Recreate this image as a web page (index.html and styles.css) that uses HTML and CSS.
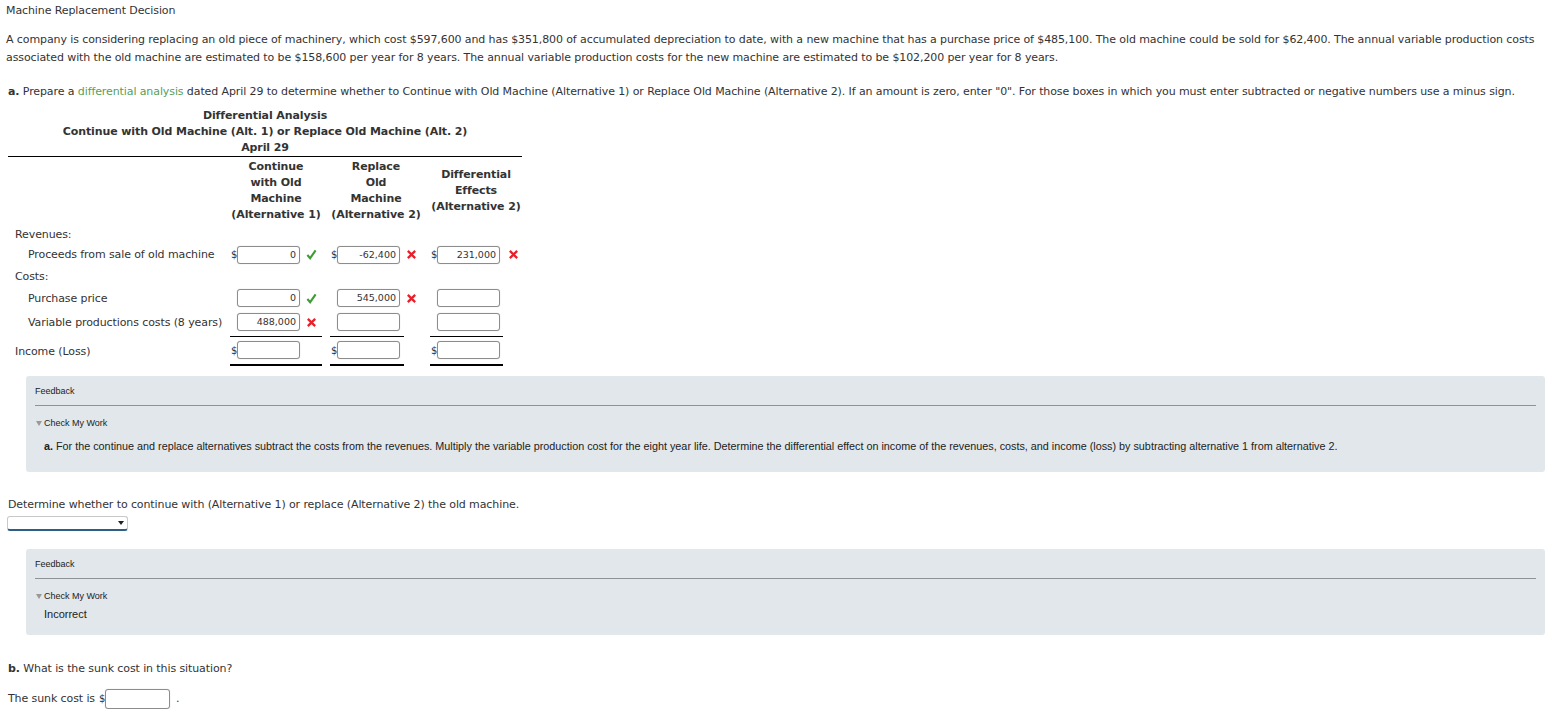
FILE: index.html
```html
<!DOCTYPE html>
<html>
<head>
<meta charset="utf-8">
<link rel="stylesheet" href="styles.css">
</head>
<body>
<div class="page">
  <div class="title">Machine Replacement Decision</div>
  <p class="intro">A company is considering replacing an old piece of machinery, which cost $597,600 and has $351,800 of accumulated depreciation to date, with a new machine that has a purchase price of $485,100. The old machine could be sold for $62,400. The annual variable production costs associated with the old machine are estimated to be $158,600 per year for 8 years. The annual variable production costs for the new machine are estimated to be $102,200 per year for 8 years.</p>
  <p class="q"><b>a.</b> Prepare a <span class="link">differential analysis</span> dated April 29 to determine whether to Continue with Old Machine (Alternative 1) or Replace Old Machine (Alternative 2). If an amount is zero, enter "0". For those boxes in which you must enter subtracted or negative numbers use a minus sign.</p>

  <div class="da">
    <div class="da-title">
      <div>Differential Analysis</div>
      <div>Continue with Old Machine (Alt. 1) or Replace Old Machine (Alt. 2)</div>
      <div>April 29</div>
    </div>
    <div class="row head">
      <div class="lbl"></div>
      <div class="hcell">Continue<br>with Old<br>Machine<br>(Alternative 1)</div>
      <div class="hcell">Replace<br>Old<br>Machine<br>(Alternative 2)</div>
      <div class="hcell mid">Differential<br>Effects<br>(Alternative 2)</div>
    </div>
    <div class="row r-rev"><div class="lbl">Revenues:</div></div>
    <div class="row r-proc">
      <div class="lbl ind">Proceeds from sale of old machine</div>
      <div class="cell"><span class="dol">$</span><span class="inp">0</span><svg class="ic" viewBox="0 0 12 12"><path d="M1.5 6.5 L4.5 10 L10.5 1.5" fill="none" stroke="#3f9c35" stroke-width="2.3"/></svg></div>
      <div class="cell"><span class="dol">$</span><span class="inp">-62,400</span><svg class="ic" viewBox="0 0 12 12"><path d="M2 2 L10 10 M10 2 L2 10" fill="none" stroke="#e8202a" stroke-width="2.5"/></svg></div>
      <div class="cell"><span class="dol">$</span><span class="inp">231,000</span><svg class="ic far" viewBox="0 0 12 12"><path d="M2 2 L10 10 M10 2 L2 10" fill="none" stroke="#e8202a" stroke-width="2.5"/></svg></div>
    </div>
    <div class="row r-costs"><div class="lbl">Costs:</div></div>
    <div class="row r-pp">
      <div class="lbl ind">Purchase price</div>
      <div class="cell"><span class="dol"></span><span class="inp">0</span><svg class="ic" viewBox="0 0 12 12"><path d="M1.5 6.5 L4.5 10 L10.5 1.5" fill="none" stroke="#3f9c35" stroke-width="2.3"/></svg></div>
      <div class="cell"><span class="dol"></span><span class="inp">545,000</span><svg class="ic" viewBox="0 0 12 12"><path d="M2 2 L10 10 M10 2 L2 10" fill="none" stroke="#e8202a" stroke-width="2.5"/></svg></div>
      <div class="cell"><span class="dol"></span><span class="inp"></span></div>
    </div>
    <div class="row r-var">
      <div class="lbl ind">Variable productions costs (8 years)</div>
      <div class="cell"><span class="dol"></span><span class="inp">488,000</span><svg class="ic" viewBox="0 0 12 12"><path d="M2 2 L10 10 M10 2 L2 10" fill="none" stroke="#e8202a" stroke-width="2.5"/></svg></div>
      <div class="cell"><span class="dol"></span><span class="inp"></span></div>
      <div class="cell"><span class="dol"></span><span class="inp"></span></div>
    </div>
    <div class="row r-line">
      <div class="lbl"></div>
      <div class="ul u1"></div>
      <div class="ul u2"></div>
      <div class="ul u3"></div>
    </div>
    <div class="row r-inc">
      <div class="lbl low">Income (Loss)</div>
      <div class="cell"><span class="dol">$</span><span class="inp"></span></div>
      <div class="cell"><span class="dol">$</span><span class="inp"></span></div>
      <div class="cell"><span class="dol">$</span><span class="inp"></span></div>
    </div>
    <div class="row r-dbl">
      <div class="lbl"></div>
      <div class="ul thick u1"></div>
      <div class="ul thick u2"></div>
      <div class="ul thick u3"></div>
    </div>
  </div>

  <div class="fb fb1">
    <div class="fb-h">Feedback</div>
    <div class="fb-c"><span class="tri"></span>Check My Work</div>
    <div class="fb-t"><b>a.</b> For the continue and replace alternatives subtract the costs from the revenues. Multiply the variable production cost for the eight year life. Determine the differential effect on income of the revenues, costs, and income (loss) by subtracting alternative 1 from alternative 2.</div>
  </div>

  <p class="det">Determine whether to continue with (Alternative 1) or replace (Alternative 2) the old machine.</p>
  <div class="sel"><span class="caret"></span></div>

  <div class="fb fb2">
    <div class="fb-h">Feedback</div>
    <div class="fb-c"><span class="tri"></span>Check My Work</div>
    <div class="fb-i">Incorrect</div>
  </div>

  <p class="qb"><b>b.</b> What is the sunk cost in this situation?</p>
  <div class="sunk">The sunk cost is <span class="dol">$</span><span class="inp wide"></span><span class="dot">.</span></div>
</div>
</body>
</html>
```

FILE: styles.css
```css
html, body { margin: 0; padding: 0; background: #fff; }
body {
  font-family: "DejaVu Sans", Verdana, sans-serif;
  font-size: 11px;
  letter-spacing: -0.1px;
  color: #333;
}
.page { padding: 3px 7px 0 6px; }
.title { line-height: 16px; }
.intro { margin: 12px 0 0 0; line-height: 18px; }
.q { margin: 16px 0 0 2px; line-height: 18px; }
.link { color: #55a05a; }
b { font-weight: bold; }

.da { width: 514px; margin: 7px 0 0 2px; }
.da-title {
  text-align: center;
  font-weight: bold;
  line-height: 16px;
  border-bottom: 1px solid #000;
}
.row { display: flex; align-items: center; }
.lbl { width: 222px; flex: none; box-sizing: border-box; padding-left: 7px; }
.row .lbl.ind { padding-left: 20px; }
.row .lbl.low { padding-top: 3px; }
.head { align-items: stretch; padding-top: 2px; height: 64px; }
.hcell {
  width: 92px; margin-right: 8px; flex: none;
  text-align: center; font-weight: bold; line-height: 16px;
}
.hcell.mid { display: flex; align-items: center; justify-content: center; }
.r-rev { height: 20px; margin-top: 1px; }
.r-proc { height: 21px; }
.r-costs { height: 23px; }
.r-pp { height: 20px; }
.r-var { height: 28px; }
.r-line { height: 4px; align-items: flex-start; }
.r-inc { height: 20px; }
.r-dbl { height: 8px; align-items: flex-start; }

.cell { width: 100px; flex: none; display: flex; align-items: center; }
.dol { width: 6px; flex: none; font-size: 10px; color: #333; padding-left: 1px; letter-spacing: 0; }
.inp {
  display: inline-block;
  width: 58px; height: 16px;
  border: 1px solid #8c8c8c;
  border-radius: 3px;
  box-shadow: 0 0 1px rgba(0,0,0,0.25);
  background: #fff;
  text-align: right;
  font-size: 9.5px;
  line-height: 16px;
  padding-right: 3px;
  color: #333;
  letter-spacing: 0;
}
.inp.wide { width: 63px; height: 18px; padding-right: 0; }
.ic { width: 11px; height: 11px; margin-left: 6px; }
.ic.far { margin-left: 8px; }

.ul { border-top: 1px solid #000; flex: none; }
.ul.thick { border-top: 2px solid #000; margin-top: 4px; }
.u1 { width: 92px; margin-right: 8px; }
.u2 { width: 74px; margin-right: 26px; }
.u3 { width: 73px; }

.fb {
  margin: 8px 0 0 20px;
  background: #e1e7ea;
  border-radius: 3px;
  padding: 0 9px 0 9px;
  font-family: "Liberation Sans", Arial, sans-serif;
  letter-spacing: 0;
  color: #222;
}
.fb1 { height: 96px; }
.fb-h {
  font-size: 9px;
  padding-top: 9px;
  line-height: 12px;
  padding-bottom: 8px;
  border-bottom: 1px solid #8e9396;
}
.fb-c { font-size: 9px; line-height: 12px; margin-top: 11px; padding-left: 1px; display: flex; align-items: center; }
.tri {
  display: inline-block;
  width: 0; height: 0;
  border-left: 3px solid transparent;
  border-right: 3px solid transparent;
  border-top: 5px solid #999;
  margin-right: 2px;
}
.fb-t { font-size: 10.8px; line-height: 14px; margin-top: 10px; padding-left: 9px; }
.fb-i { font-size: 11px; line-height: 14px; margin-top: 5px; padding-left: 9px; }

.det { margin: 25px 0 0 2px; line-height: 16px; }
.sel {
  width: 119px; height: 12px;
  margin: 3px 0 0 1px;
  border: 1px solid #c8c8c8;
  border-bottom: 2px solid #2f5e84;
  border-radius: 3px;
  position: relative;
  background: #fff;
}
.caret {
  position: absolute; right: 3px; top: 4px;
  border-left: 3px solid transparent;
  border-right: 3px solid transparent;
  border-top: 4px solid #222;
}
.fb2 { margin-top: 18px; height: 86px; }

.qb { margin: 26px 0 0 2px; line-height: 16px; }
.sunk { margin-top: 12px; margin-left: 2px; display: flex; align-items: center; line-height: 20px; }
.sunk .dol { padding-left: 4px; width: 6px; }
.dot { margin-left: 6px; }
```
